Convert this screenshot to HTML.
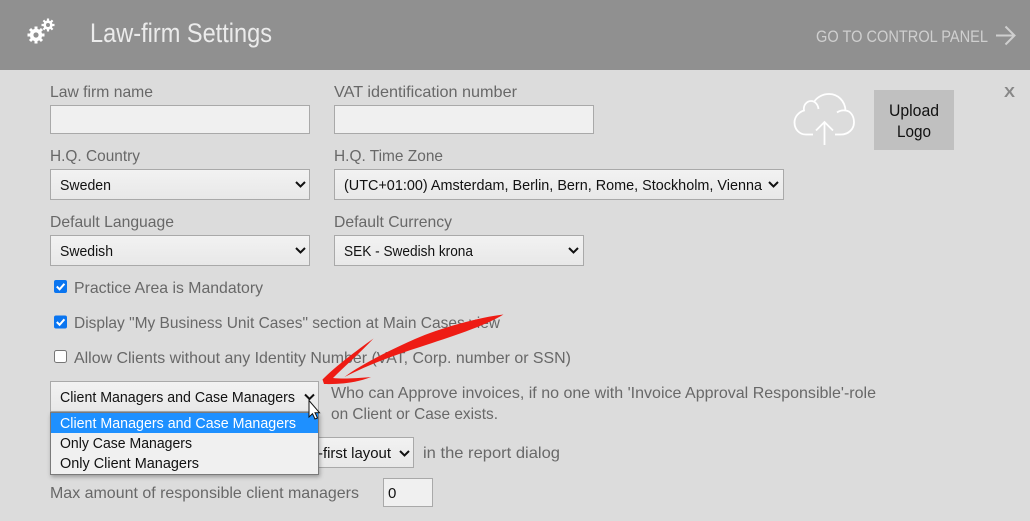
<!DOCTYPE html>
<html><head><meta charset="utf-8"><title>Law-firm Settings</title>
<style>
html,body{margin:0;padding:0;background:#dcdcdc;overflow:hidden}
svg{display:block}
text{font-family:"Liberation Sans",sans-serif;font-size:16px;fill:#686868}
.d{fill:#111;font-size:15px}
</style></head><body>
<svg width="1030" height="521" viewBox="0 0 1030 521" xmlns="http://www.w3.org/2000/svg">
<defs>
<filter id="sh" x="-5%" y="-10%" width="110%" height="125%"><feDropShadow dx="1" dy="2" stdDeviation="2" flood-color="#000" flood-opacity=".3"/></filter>
<linearGradient id="g" x1="0" y1="0" x2="0" y2="1"><stop offset="0" stop-color="#f2f2f2"/><stop offset="1" stop-color="#e8e8e8"/></linearGradient>
</defs>
<rect width="1030" height="521" fill="#dcdcdc"/>
<rect width="1030" height="70" fill="#909090"/>

<!-- gears -->
<g fill="#fff">
<g transform="translate(36,35)">
<circle r="6.2"/><g stroke="#fff" stroke-width="3"><path d="M0-8.500V8.500M-8.500 0H8.500M-6-6L6 6M-6 6L6-6"/></g><circle r="2.600" fill="#909090"/>
</g>
<g transform="translate(48,25)">
<circle r="4.600"/><g stroke="#fff" stroke-width="2.200"><path d="M0-6.500V6.500M-6.500 0H6.500M-4.600-4.600L4.600 4.600M-4.600 4.600L4.600-4.600"/></g><circle r="2" fill="#909090"/>
</g>
</g>
<text x="90" y="42" style="font-size:27px;fill:#ebebeb" textLength="182" lengthAdjust="spacingAndGlyphs">Law-firm Settings</text>
<text x="816" y="42" style="font-size:17px;fill:#cfcfcf" textLength="172" lengthAdjust="spacingAndGlyphs">GO TO CONTROL PANEL</text>
<path d="M996 35.500H1014M1005.500 26.500L1014.500 35.500L1005.500 44.500" fill="none" stroke="#cfcfcf" stroke-width="2"/>

<!-- row 1 -->
<text x="50" y="97" textLength="103" lengthAdjust="spacingAndGlyphs">Law firm name</text>
<text x="334" y="97" textLength="183" lengthAdjust="spacingAndGlyphs">VAT identification number</text>
<rect x="50.500" y="105.500" width="259" height="28" fill="#f0f0f0" stroke="#a9a9a9"/>
<rect x="334.500" y="105.500" width="259" height="28" fill="#f0f0f0" stroke="#a9a9a9"/>

<!-- cloud + upload -->
<path d="M813 134.500H806C799 134.500 794.500 129 794.500 122.500C794.500 116.500 799 112 804 110.500C803 105 807 101 811 101C815 101 818 104.500 818.500 109M814 102C817 97 823 94 829 94C838 94 845 101 845.500 110.500C851 111 854 116.500 854 122.500C854 129 848.500 134.500 841 134.500H835M845.500 110.500C842 110 839 111 837 112.500" fill="none" stroke="#fff" stroke-width="1.800"/>
<path d="M824.500 145V122M816 130.500L824.500 122L833 130.500" fill="none" stroke="#fff" stroke-width="1.800"/>
<rect x="874" y="90" width="80" height="60" fill="#c0c0c0"/>
<text x="889" y="116" class="d" style="font-size:17px" textLength="50" lengthAdjust="spacingAndGlyphs">Upload</text>
<text x="897" y="137" class="d" style="font-size:17px" textLength="34" lengthAdjust="spacingAndGlyphs">Logo</text>
<text x="1004" y="97" style="font-size:15px;font-weight:bold;fill:#888" textLength="11" lengthAdjust="spacingAndGlyphs">X</text>

<!-- row 2 -->
<text x="50" y="161" textLength="90" lengthAdjust="spacingAndGlyphs">H.Q. Country</text>
<text x="334" y="161" textLength="109" lengthAdjust="spacingAndGlyphs">H.Q. Time Zone</text>
<rect x="50.500" y="169.500" width="259" height="30" fill="url(#g)" stroke="#a9a9a9"/>
<rect x="334.500" y="169.500" width="449" height="30" fill="url(#g)" stroke="#a9a9a9"/>
<text x="60" y="190" class="d" textLength="51" lengthAdjust="spacingAndGlyphs">Sweden</text>
<text x="344" y="190" class="d" textLength="418" lengthAdjust="spacingAndGlyphs">(UTC+01:00) Amsterdam, Berlin, Bern, Rome, Stockholm, Vienna</text>
<path d="M296 182l4.500 4.500 4.500-4.500M769 182l4.500 4.500 4.500-4.500" fill="none" stroke="#111" stroke-width="2"/>

<!-- row 3 -->
<text x="50" y="227" textLength="124" lengthAdjust="spacingAndGlyphs">Default Language</text>
<text x="334" y="227" textLength="118" lengthAdjust="spacingAndGlyphs">Default Currency</text>
<rect x="50.500" y="235.500" width="259" height="30" fill="url(#g)" stroke="#a9a9a9"/>
<rect x="334.500" y="235.500" width="249" height="30" fill="url(#g)" stroke="#a9a9a9"/>
<text x="60" y="256" class="d" textLength="53" lengthAdjust="spacingAndGlyphs">Swedish</text>
<text x="344" y="256" class="d" textLength="129" lengthAdjust="spacingAndGlyphs">SEK - Swedish krona</text>
<path d="M296 248l4.500 4.500 4.500-4.500M569 248l4.500 4.500 4.500-4.500" fill="none" stroke="#111" stroke-width="2"/>

<!-- checks -->
<rect x="54" y="280" width="13" height="13" rx="2" fill="#0a75f0"/>
<path d="M56.800 286.500l2.800 2.800 4.800-5.500" fill="none" stroke="#fff" stroke-width="2"/>
<text x="74" y="293" textLength="189" lengthAdjust="spacingAndGlyphs">Practice Area is Mandatory</text>
<rect x="54" y="315.500" width="13" height="13" rx="2" fill="#0a75f0"/>
<path d="M56.800 322l2.800 2.800 4.800-5.500" fill="none" stroke="#fff" stroke-width="2"/>
<text x="74" y="328" textLength="426" lengthAdjust="spacingAndGlyphs">Display "My Business Unit Cases" section at Main Cases view</text>
<rect x="54.500" y="350.500" width="12" height="12" rx="2" fill="#fff" stroke="#767676"/>
<text x="74" y="363" textLength="497" lengthAdjust="spacingAndGlyphs">Allow Clients without any Identity Number (VAT, Corp. number or SSN)</text>

<!-- approve -->
<text x="331" y="398" textLength="545" lengthAdjust="spacingAndGlyphs">Who can Approve invoices, if no one with 'Invoice Approval Responsible'-role</text>
<text x="331" y="419" textLength="167" lengthAdjust="spacingAndGlyphs">on Client or Case exists.</text>

<!-- hidden select row -->
<rect x="300.500" y="437.500" width="113" height="30" fill="url(#g)" stroke="#a9a9a9"/>
<text x="318" y="458" class="d" textLength="73" lengthAdjust="spacingAndGlyphs">-first layout</text>
<path d="M400 451l4.500 4.500 4.500-4.500" fill="none" stroke="#111" stroke-width="2"/>
<text x="423" y="458" textLength="137" lengthAdjust="spacingAndGlyphs">in the report dialog</text>

<text x="50" y="498" textLength="309" lengthAdjust="spacingAndGlyphs">Max amount of responsible client managers</text>
<rect x="383.500" y="478.500" width="49" height="28" fill="#f0f0f0" stroke="#a9a9a9"/>
<text x="388" y="498" class="d">0</text>

<!-- open select -->
<rect x="50.500" y="381.500" width="268" height="30" fill="url(#g)" stroke="#a9a9a9"/>
<text x="60" y="402" class="d" textLength="235" lengthAdjust="spacingAndGlyphs">Client Managers and Case Managers</text>
<path d="M305 394.500l4.500 4.500 4.500-4.500" fill="none" stroke="#111" stroke-width="2"/>
<rect x="50.500" y="412.500" width="268" height="62" fill="#f0f0f0" stroke="#7a7a7a" filter="url(#sh)"/>
<rect x="51" y="413" width="267" height="20" fill="#1e90ff"/>
<text x="60" y="428" class="d" style="fill:#fff" textLength="236" lengthAdjust="spacingAndGlyphs">Client Managers and Case Managers</text>
<text x="60" y="448" class="d" textLength="132" lengthAdjust="spacingAndGlyphs">Only Case Managers</text>
<text x="60" y="468" class="d" textLength="139" lengthAdjust="spacingAndGlyphs">Only Client Managers</text>

<!-- cursor -->
<path d="M309 400.500V417L312.500 413.700L315 419L317.500 418L315 412.700H319.500Z" fill="#fff" stroke="#111" stroke-width="1"/>

<!-- red arrow -->
<path d="M373.500 338.500C356 351 336 366 322.500 379.500L324 384C340 384.500 358 382.500 371 377C355 378.500 342 379 333 378C346 365 361 352 373.500 338.500Z" fill="#ee1c14"/>
<path d="M503.500 314.500C480 317 440 328 415 339C390 350 360 365 344.500 377C370 364 395 355 420 347C450 337 485 326 503.500 314.500Z" fill="#ee1c14"/>
</svg>
</body></html>
